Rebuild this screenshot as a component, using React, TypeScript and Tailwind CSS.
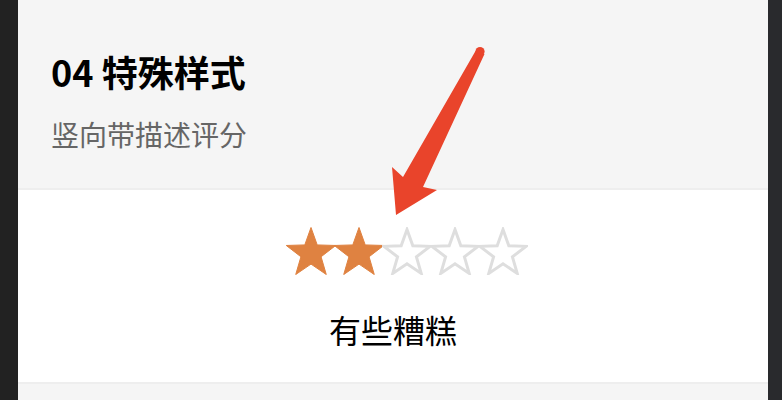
import React from 'react';

const starPoints = (cx: number, cy: number, R: number, r: number) => {
  const pts: string[] = [];
  for (let i = 0; i < 10; i++) {
    const rad = i % 2 === 0 ? R : r;
    const a = (-90 + i * 36) * (Math.PI / 180);
    pts.push(`${(cx + rad * Math.cos(a)).toFixed(2)},${(cy + rad * Math.sin(a)).toFixed(2)}`);
  }
  return pts.join(' ');
};

const Star: React.FC<{ filled: boolean; first: boolean }> = ({ filled, first }) => (
  <svg
    width="50"
    height="48"
    viewBox="0 0 50 48"
    className={first ? 'block shrink-0' : 'block shrink-0 -ml-[2px]'}
  >
    {filled ? (
      <polygon points={starPoints(25, 26.5, 26, 10.6)} fill="#df8241" strokeLinejoin="round" stroke="#df8241" strokeWidth="1" />
    ) : (
      <polygon
        points={starPoints(25, 26.8, 24.2, 9.9)}
        fill="none"
        stroke="#dedede"
        strokeWidth="3"
        strokeLinejoin="miter"
      />
    )}
  </svg>
);

const App: React.FC = () => {
  const value = 2;

  return (
    <div
      className="relative flex h-[400px] w-full overflow-hidden bg-[#222222]"
      style={{ fontFamily: '"Noto Sans CJK SC", "Noto Sans", sans-serif' }}
    >
      {/* left gutter */}
      <div className="w-[18px] shrink-0 bg-[#222222]" />

      {/* page */}
      <div className="flex flex-1 flex-col bg-[#f5f5f5]">
        <div className="px-[33px] pt-[53px] pb-[40px]">
          <h2 className="text-[36px] font-bold leading-[36px] text-black">04 特殊样式</h2>
          <p className="mt-[31px] text-[28px] leading-[28px] text-[#666666]">竖向带描述评分</p>
        </div>

        <div className="flex flex-col items-center border-y-2 border-[#eeeeee] bg-white pt-[37px] pb-[37px]">
          <div className="flex w-full justify-center pl-[27px]">
            {[1, 2, 3, 4, 5].map((n) => (
              <Star key={n} filled={n <= value} first={n === 1} />
            ))}
          </div>
          <div className="mt-[38px] text-[32px] leading-[32px] text-black">有些糟糕</div>
        </div>
      </div>

      {/* right gutter */}
      <div className="w-[14px] shrink-0 bg-[#292a2d]" />

      {/* annotation arrow */}
      <svg className="pointer-events-none absolute left-0 top-0" width="782" height="400" viewBox="0 0 782 400">
        <path
          d="M475.5 51 L403 177 L392 167 L396 215 L437 190 L423 187 L484.5 54 Z"
          fill="#e9442b"
          strokeLinejoin="round"
        />
        <circle cx="480" cy="51.5" r="4.6" fill="#e9442b" />
      </svg>
    </div>
  );
};

export default App;
